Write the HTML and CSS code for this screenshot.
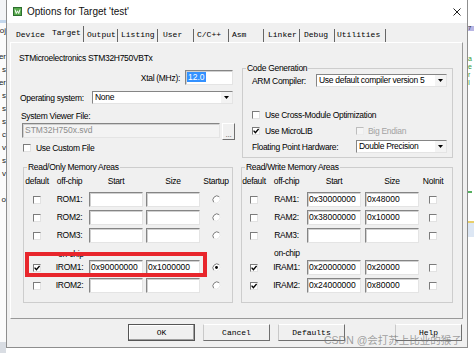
FILE: index.html
```html
<!DOCTYPE html>
<html lang="en">
<head>
  <meta charset="UTF-8">
  <meta name="viewport" content="width=device-width, initial-scale=1.0">
  <title>Options for Target 'test'</title>
  <link rel="stylesheet" href="styles.css">
</head>
<body>
  <div class="screen">
    <!-- window behind, left side -->
    <div class="behind-left">
      <div class="bl-top"></div>
      <div class="bl-bar"></div>
      <div class="bl-text">oj<br>&nbsp;<br>er<br>s<br>er<br>s<br>s<br>s<br>c<br>v<br>s<br>v<br>&nbsp;<br>o</div>
      <div class="bl-band"></div>
    </div>

    <div class="window">
      <div class="titlebar">
        <svg class="app-icon" viewBox="0 0 9 9"><rect width="9" height="9" fill="#2c6e2f"/><rect x="1" y="1" width="7" height="7" fill="#56a94a"/><path d="M2 2.5 3.3 6.5 4.5 3.8 5.7 6.5 7 2.5" fill="none" stroke="#fff" stroke-width="1"/></svg>
        <span class="title">Options for Target 'test'</span>
        <svg class="close" viewBox="0 0 8 8"><path d="M0.5 0.5 7.5 7.5M7.5 0.5 0.5 7.5" stroke="#222" stroke-width="1"/></svg>
      </div>

      <div class="dialog">
        <div class="tabs">
          <span class="tab">Device</span>
          <span class="tab active">Target</span>
          <span class="tab">Output</span>
          <span class="tab">Listing</span>
          <span class="tab">User</span>
          <span class="tab">C/C++</span>
          <span class="tab">Asm</span>
          <span class="tab">Linker</span>
          <span class="tab">Debug</span>
          <span class="tab">Utilities</span>
        </div>

        <div class="page">
          <!-- device / xtal / os -->
          <div class="device">
            <div class="device-name">STMicroelectronics STM32H750VBTx</div>
            <div class="xtal-row">
              <span>Xtal (MHz):</span>
              <span class="field xtal"><span class="sel">12.0</span></span>
            </div>
            <div class="os-row">
              <span>Operating system:</span>
              <span class="select os"><span class="val">None</span><span class="arrow"><svg viewBox="0 0 5 3"><path d="M0 0H5L2.5 3Z"/></svg></span></span>
            </div>
            <div class="svf-label">System Viewer File:</div>
            <div class="svd-row">
              <span class="field svd">STM32H750x.svd</span>
              <span class="dots">...</span>
            </div>
            <div class="custom-row"><i class="chk"></i><span>Use Custom File</span></div>
          </div>

          <!-- code generation -->
          <fieldset class="group codegen">
            <legend>Code Generation</legend>
            <div class="cg-body">
              <div class="cg-row">
                <span>ARM Compiler:</span>
                <span class="select arm-sel"><span class="val">Use default compiler version 5</span><span class="arrow"><svg viewBox="0 0 5 3"><path d="M0 0H5L2.5 3Z"/></svg></span></span>
              </div>
              <div class="check-row cross"><i class="chk"></i><span>Use Cross-Module Optimization</span></div>
              <div class="cg-pair">
                <div class="check-row"><i class="chk"><svg viewBox="0 0 6 6"><path d="M0.6 2.6 2.4 4.6 5.6 0.9" fill="none" stroke="#000" stroke-width="1.4"/></svg></i><span>Use MicroLIB</span></div>
                <div class="check-row off"><i class="chk disabled"></i><span>Big Endian</span></div>
              </div>
              <div class="cg-row">
                <span>Floating Point Hardware:</span>
                <span class="select fp-sel"><span class="val">Double Precision</span><span class="arrow"><svg viewBox="0 0 5 3"><path d="M0 0H5L2.5 3Z"/></svg></span></span>
              </div>
            </div>
          </fieldset>

          <!-- read only memory -->
          <fieldset class="group rom">
            <legend>Read/Only Memory Areas</legend>
            <div class="mem-grid">
              <span class="hd">default</span><span class="hd">off-chip</span><span class="hd f">Start</span><span class="hd f">Size</span><span class="hd">Startup</span>

              <span class="cell"><i class="chk"></i></span><span class="lbl">ROM1:</span><span class="field"></span><span class="field"></span>
              <span class="cell"><svg class="radio" viewBox="0 0 9 9"><circle cx="4.5" cy="4.5" r="4" fill="#fff"/><path d="M1.7 7.3A4 4 0 0 1 7.3 1.7" fill="none" stroke="#777"/><path d="M7.3 1.7A4 4 0 0 1 1.7 7.3" fill="none" stroke="#e4e4e4"/></svg></span>

              <span class="cell"><i class="chk"></i></span><span class="lbl">ROM2:</span><span class="field"></span><span class="field"></span>
              <span class="cell"><svg class="radio" viewBox="0 0 9 9"><circle cx="4.5" cy="4.5" r="4" fill="#fff"/><path d="M1.7 7.3A4 4 0 0 1 7.3 1.7" fill="none" stroke="#777"/><path d="M7.3 1.7A4 4 0 0 1 1.7 7.3" fill="none" stroke="#e4e4e4"/></svg></span>

              <span class="cell"><i class="chk"></i></span><span class="lbl">ROM3:</span><span class="field"></span><span class="field"></span>
              <span class="cell"><svg class="radio" viewBox="0 0 9 9"><circle cx="4.5" cy="4.5" r="4" fill="#fff"/><path d="M1.7 7.3A4 4 0 0 1 7.3 1.7" fill="none" stroke="#777"/><path d="M7.3 1.7A4 4 0 0 1 1.7 7.3" fill="none" stroke="#e4e4e4"/></svg></span>

              <span class="onchip">on-chip</span>

              <span class="cell"><i class="chk"><svg viewBox="0 0 6 6"><path d="M0.6 2.6 2.4 4.6 5.6 0.9" fill="none" stroke="#000" stroke-width="1.4"/></svg></i></span><span class="lbl">IROM1:</span><span class="field">0x90000000</span><span class="field">0x1000000</span>
              <span class="cell"><svg class="radio" viewBox="0 0 9 9"><circle cx="4.5" cy="4.5" r="4" fill="#fff"/><path d="M1.7 7.3A4 4 0 0 1 7.3 1.7" fill="none" stroke="#777"/><path d="M7.3 1.7A4 4 0 0 1 1.7 7.3" fill="none" stroke="#e4e4e4"/><circle cx="4.5" cy="4.5" r="1.4" fill="#000"/></svg></span>

              <span class="cell"><i class="chk"></i></span><span class="lbl">IROM2:</span><span class="field"></span><span class="field"></span>
              <span class="cell"><svg class="radio" viewBox="0 0 9 9"><circle cx="4.5" cy="4.5" r="4" fill="#fff"/><path d="M1.7 7.3A4 4 0 0 1 7.3 1.7" fill="none" stroke="#777"/><path d="M7.3 1.7A4 4 0 0 1 1.7 7.3" fill="none" stroke="#e4e4e4"/></svg></span>

              <span class="highlight"></span>
            </div>
          </fieldset>

          <!-- read write memory -->
          <fieldset class="group ram">
            <legend>Read/Write Memory Areas</legend>
            <div class="mem-grid">
              <span class="hd">default</span><span class="hd">off-chip</span><span class="hd f">Start</span><span class="hd f">Size</span><span class="hd">NoInit</span>

              <span class="cell"><i class="chk"></i></span><span class="lbl">RAM1:</span><span class="field">0x30000000</span><span class="field">0x48000</span><span class="cell"><i class="chk"></i></span>
              <span class="cell"><i class="chk"></i></span><span class="lbl">RAM2:</span><span class="field">0x38000000</span><span class="field">0x10000</span><span class="cell"><i class="chk"></i></span>
              <span class="cell"><i class="chk"></i></span><span class="lbl">RAM3:</span><span class="field"></span><span class="field"></span><span class="cell"><i class="chk"></i></span>

              <span class="onchip">on-chip</span>

              <span class="cell"><i class="chk"><svg viewBox="0 0 6 6"><path d="M0.6 2.6 2.4 4.6 5.6 0.9" fill="none" stroke="#000" stroke-width="1.4"/></svg></i></span><span class="lbl">IRAM1:</span><span class="field">0x20000000</span><span class="field">0x20000</span><span class="cell"><i class="chk"></i></span>
              <span class="cell"><i class="chk"><svg viewBox="0 0 6 6"><path d="M0.6 2.6 2.4 4.6 5.6 0.9" fill="none" stroke="#000" stroke-width="1.4"/></svg></i></span><span class="lbl">IRAM2:</span><span class="field">0x24000000</span><span class="field">0x80000</span><span class="cell"><i class="chk"></i></span>
            </div>
          </fieldset>
        </div>

        <div class="buttons">
          <span class="btn default">OK</span>
          <span class="btn">Cancel</span>
          <span class="btn">Defaults</span>
          <span class="btn help">Help</span>
        </div>
      </div>

      <div class="watermark">CSDN @会打苏上比业的猴子</div>
    </div>

    <!-- editor behind, right side -->
    <div class="behind-right">
      <div class="br-bar">7</div>
      <div class="br-code">a<br>e<br>r<br>I</div>
      <div class="br-mark"></div>
      <div class="br-yellow"></div>
      <div class="br-blue"></div>
    </div>
  </div>
</body>
</html>
```

FILE: styles.css
```css
* {
  box-sizing: border-box;
}

body {
  margin: 0;
  width: 474px;
  height: 353px;
  overflow: hidden;
  background: #fff;
  font-family: "Liberation Sans", Arial, sans-serif;
  font-size: 8.5px;
  letter-spacing: -0.3px;
  color: #000;
}

.screen {
  display: flex;
  height: 353px;
}

/* windows behind the dialog */
.behind-left {
  width: 6px;
  overflow: hidden;
  background: #fbfbfb;
  display: flex;
  flex-direction: column;
}
.bl-top {
  height: 36px;
  background: #f3f4f6;
}
.bl-bar {
  height: 6px;
  background: #c4d7ec;
}
.bl-text {
  padding-top: 1px;
  font-size: 8px;
  line-height: 13px;
  letter-spacing: 0;
  direction: rtl;
  white-space: nowrap;
  color: #222;
}
.bl-band {
  margin-top: 136px;
  height: 20px;
  background: #d9dde3;
}

.behind-right {
  width: 6px;
  overflow: hidden;
  background: #fff;
  padding-top: 26px;
}
.br-bar {
  height: 5px;
  background: #b9b6e4;
  font-size: 6px;
  line-height: 5px;
  color: #333;
}
.br-code {
  margin-top: 24px;
  font-size: 7px;
  line-height: 8px;
  color: #2e9a3c;
  letter-spacing: 0;
}
.br-mark {
  margin-top: 104px;
  height: 2px;
  width: 4px;
  background: #56b060;
}
.br-yellow {
  margin-top: 28px;
  height: 2px;
  background: #e8cf6a;
}
.br-blue {
  height: 14px;
  background: #dde7f4;
}

/* dialog window */
.window {
  position: relative;
  width: 462px;
  height: 348px;
  background: #f0f0f0;
  border: 1px solid #8e8e8e;
  border-top: 0;
  display: flex;
  flex-direction: column;
}
.titlebar {
  height: 23px;
  flex: none;
  background: #fff;
  display: flex;
  align-items: center;
  padding-left: 6px;
}
.app-icon {
  width: 9px;
  height: 9px;
}
.title {
  margin-left: 5px;
  font-size: 10px;
  letter-spacing: 0;
  color: #111;
}
.close {
  width: 8px;
  height: 8px;
  margin-left: auto;
  margin-right: 6px;
}
.dialog {
  flex: 1;
  display: flex;
  flex-direction: column;
  padding: 0 4px 6px 3px;
}

/* tabs */
.tabs {
  height: 19px;
  flex: none;
  display: flex;
  align-items: flex-end;
  font-family: "Liberation Mono", "Courier New", monospace;
  font-size: 8px;
  letter-spacing: 0;
}
.tab {
  height: 13px;
  line-height: 12px;
  padding-left: 3px;
  border-right: 1px solid #666;
  white-space: nowrap;
  overflow: hidden;
}
.tab.active {
  height: 16px;
  line-height: 13px;
}
.tab:nth-child(1) { width: 38px; padding-left: 6px; border-right: 0; }
.tab:nth-child(2) { width: 36px; padding-left: 4px; }
.tab:nth-child(3) { width: 34px; }
.tab:nth-child(4) { width: 40px; }
.tab:nth-child(5) { width: 36px; padding-left: 5px; }
.tab:nth-child(6) { width: 35px; }
.tab:nth-child(7) { width: 35px; }
.tab:nth-child(8) { width: 36px; padding-left: 4px; }
.tab:nth-child(9) { width: 35px; padding-left: 4px; }
.tab:nth-child(10) { width: 51px; padding-left: 2px; }

/* tab page */
.page {
  height: 277px;
  flex: none;
  border: 1px solid;
  border-color: #fff #999 #999 #fff;
  padding: 9px 9px 0 8px;
  display: grid;
  grid-template-columns: 216px 212px;
  column-gap: 6px;
  row-gap: 4px;
  align-content: start;
  align-items: start;
}

/* form controls */
.field {
  display: block;
  height: 15px;
  background: #fff;
  border: 1px solid;
  border-color: #858585 #e4e4e4 #e4e4e4 #858585;
  box-shadow: inset 1px 1px 0 #d0d0d0;
  padding-left: 1px;
  line-height: 12px;
  letter-spacing: 0;
  white-space: nowrap;
  overflow: hidden;
}
.select {
  display: flex;
  height: 13px;
  background: #fff;
  border: 1px solid;
  border-color: #858585 #e4e4e4 #e4e4e4 #858585;
}
.select .val {
  flex: 1;
  padding-left: 2px;
  line-height: 11px;
  white-space: nowrap;
  overflow: hidden;
}
.arrow {
  width: 11px;
  display: flex;
  align-items: center;
  justify-content: center;
  background: #f3f3f3;
}
.arrow svg {
  width: 5px;
  height: 3px;
}
.chk {
  display: inline-flex;
  align-items: center;
  justify-content: center;
  flex: none;
  width: 8px;
  height: 8px;
  background: #fff;
  border: 1px solid;
  border-color: #7b7b7b #e2e2e2 #e2e2e2 #7b7b7b;
}
.chk svg {
  width: 6px;
  height: 6px;
}
.chk.disabled {
  background: #f5f5f5;
  border-color: #bdbdbd #ececec #ececec #bdbdbd;
}
.radio {
  width: 9px;
  height: 9px;
}

/* device column */
.device {
  display: flex;
  flex-direction: column;
}
.device-name {
  line-height: 12px;
  white-space: nowrap;
}
.xtal-row {
  margin-top: 6px;
  height: 15px;
  display: flex;
  justify-content: flex-end;
  align-items: center;
  gap: 5px;
  padding-right: 2px;
}
.xtal {
  width: 48px;
}
.sel {
  background: #3391ff;
  color: #fff;
  padding: 0 1px;
}
.os-row {
  margin-top: 6px;
  height: 13px;
  display: flex;
  align-items: center;
  padding: 0 2px 0 1px;
}
.os {
  width: 141px;
  margin-left: auto;
}
.svf-label {
  margin-top: 6px;
  line-height: 12px;
  padding-left: 2px;
}
.svd-row {
  margin-top: 1px;
  display: flex;
  align-items: flex-start;
  gap: 2px;
  padding-left: 3px;
}
.svd {
  width: 198px;
  background: #f3f3f3;
  color: #8d8d8d;
  padding-left: 2px;
}
.dots {
  width: 13px;
  height: 17px;
  display: flex;
  align-items: flex-end;
  justify-content: center;
  background: #f0f0f0;
  border: 1px solid;
  border-color: #fff #6f6f6f #6f6f6f #fff;
  font-size: 8px;
  line-height: 9px;
  color: #555;
}
.custom-row {
  margin-top: 3px;
  height: 10px;
  display: flex;
  align-items: center;
  gap: 5px;
  padding-left: 4px;
}

/* group boxes */
.group {
  margin: 0;
  padding: 0;
  min-width: 0;
  border: 1px solid #cdcdcd;
}
.group legend {
  margin-left: 3px;
  padding: 0 1px;
  line-height: 10px;
}
.codegen {
  width: 211px;
  margin-top: 11px;
  margin-left: 1px;
}
.cg-body {
  padding: 0 5px 3px 9px;
}
.cg-row {
  height: 15px;
  display: flex;
  align-items: center;
  justify-content: space-between;
}
.arm-sel {
  width: 131px;
}
.fp-sel {
  width: 91px;
}
.check-row {
  height: 16px;
  display: flex;
  align-items: center;
  gap: 5px;
  white-space: nowrap;
}
.cross {
  margin-top: 19px;
}
.cg-pair {
  display: grid;
  grid-template-columns: 104px 1fr;
}
.check-row.off {
  gap: 4px;
  color: #a3a3a3;
}

/* memory areas */
.rom {
  width: 210px;
  margin-left: 4px;
}
.ram {
  width: 212px;
}
.mem-grid {
  position: relative;
  display: grid;
  grid-template-rows: 18px 18px 18px 18px 14px 18px 18px;
  align-items: start;
  padding: 2px 0 6px;
}
.rom .mem-grid {
  grid-template-columns: 26px 39px 57px 54px 32px;
}
.ram .mem-grid {
  grid-template-columns: 24px 41px 58px 54px 28px;
}
.hd, .lbl {
  line-height: 15px;
  text-align: center;
  white-space: nowrap;
}
.hd.f {
  width: 54px;
}
.mem-grid .field {
  width: 54px;
}
.cell {
  height: 15px;
  display: flex;
  align-items: center;
  justify-content: center;
}
.onchip {
  grid-column: 2 / -1;
  line-height: 14px;
  padding-left: 8px;
}
.rom .onchip {
  padding-top: 1px;
}
/* red annotation box drawn over the IROM1 row */
.highlight {
  position: absolute;
  grid-row: 6 / 7;
  grid-column: 1 / 5;
  top: -8px;
  bottom: 1px;
  left: 1px;
  right: -7px;
  border: 4px solid #e8262c;
}

/* bottom buttons */
.buttons {
  display: flex;
  justify-content: flex-end;
  gap: 8px;
  margin-top: 5px;
  padding-right: 1px;
}
.btn {
  width: 67px;
  height: 17px;
  display: flex;
  align-items: center;
  justify-content: center;
  font-family: "Liberation Mono", "Courier New", monospace;
  font-size: 8px;
  letter-spacing: 0;
  background: #f0f0f0;
  border: 1px solid;
  border-color: #fff #6f6f6f #6f6f6f #c9c9c9;
}
.btn.default {
  border-color: #555;
  box-shadow: inset -1px -1px 0 #a0a0a0, inset 1px 1px 0 #fff;
}
.btn.help {
  margin-left: 42px;
}

.watermark {
  position: absolute;
  left: 317px;
  top: 334px;
  font-family: "Liberation Sans", "Noto Sans CJK SC", sans-serif;
  font-size: 10.5px;
  line-height: 12px;
  letter-spacing: 0;
  white-space: nowrap;
  color: rgba(120, 120, 120, 0.7);
}
```
